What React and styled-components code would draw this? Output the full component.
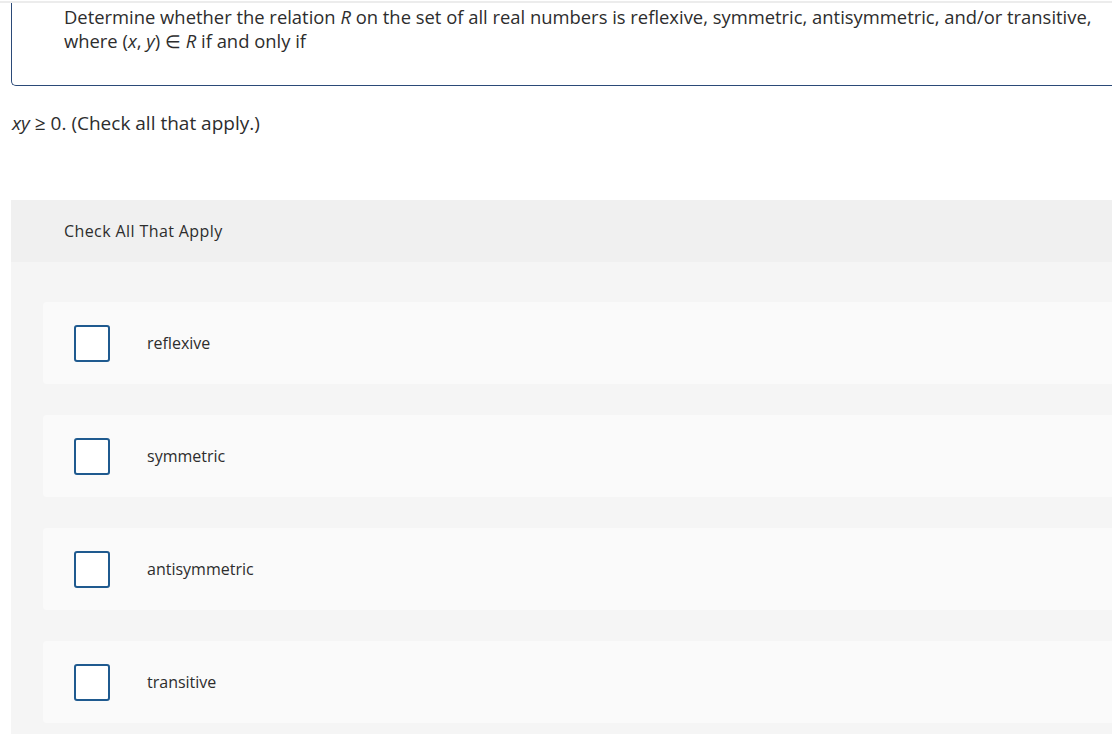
import React from "react";
import styled, { createGlobalStyle } from "styled-components";

const Global = createGlobalStyle`
  html, body { margin: 0; padding: 0; background: #fff; }
  body { font-family: "Open Sans", "Lato", sans-serif; color: #2d2d2d; }
`;

const Page = styled.div`
  width: 1112px;
  height: 734px;
  overflow: hidden;
  display: flex;
  flex-direction: column;
`;

const TopRule = styled.div`
  height: 2px;
  margin-top: 1px;
  background: #ececec;
`;

const PromptBox = styled.div`
  margin-left: 11px;
  height: 83px;
  box-sizing: border-box;
  border-left: 1.5px solid #2b4a78;
  border-bottom: 1.5px solid #2b4a78;
  border-bottom-left-radius: 5px;
  padding: 2px 0 0 52px;
  font-size: 18.4px;
  line-height: 24px;
  white-space: nowrap;
`;

const Var = styled.i`
  font-style: italic;
`;

const Statement = styled.p`
  margin: 24px 0 0 12px;
  font-size: 19px;
  line-height: 26px;
`;

const Panel = styled.section`
  margin: 64px 0 0 11px;
  background: #f5f5f5;
  flex: 1;
  display: flex;
  flex-direction: column;
`;

const PanelHeader = styled.div`
  height: 62px;
  background: #f0f0f0;
  display: flex;
  align-items: center;
  padding-left: 53px;
  font-size: 16px;
  letter-spacing: 0.4px;
`;

const OptionList = styled.div`
  display: flex;
  flex-direction: column;
  gap: 31px;
  padding: 40px 0 0 32px;
`;

const Option = styled.label`
  height: 82px;
  background: #fafafa;
  border-radius: 4px 0 0 4px;
  display: flex;
  align-items: center;
  padding-left: 31px;
  font-size: 16px;
  cursor: pointer;
`;

const Box = styled.span`
  width: 36px;
  height: 37px;
  box-sizing: border-box;
  border: 2px solid #1f5a8f;
  border-radius: 3px;
  background: #fff;
  margin-right: 37px;
  flex-shrink: 0;
`;

const options = ["reflexive", "symmetric", "antisymmetric", "transitive"];

export default function App() {
  return (
    <Page>
      <Global />
      <TopRule />
      <PromptBox>
        Determine whether the relation <Var>R</Var> on the set of all real numbers is reflexive, symmetric, antisymmetric, and/or transitive,
        <br />
        where (<Var>x</Var>, <Var>y</Var>) ∈ <Var>R</Var> if and only if
      </PromptBox>
      <Statement>
        <Var>xy</Var> ≥ 0. (Check all that apply.)
      </Statement>
      <Panel>
        <PanelHeader>Check All That Apply</PanelHeader>
        <OptionList>
          {options.map((o) => (
            <Option key={o}>
              <Box />
              {o}
            </Option>
          ))}
        </OptionList>
      </Panel>
    </Page>
  );
}
